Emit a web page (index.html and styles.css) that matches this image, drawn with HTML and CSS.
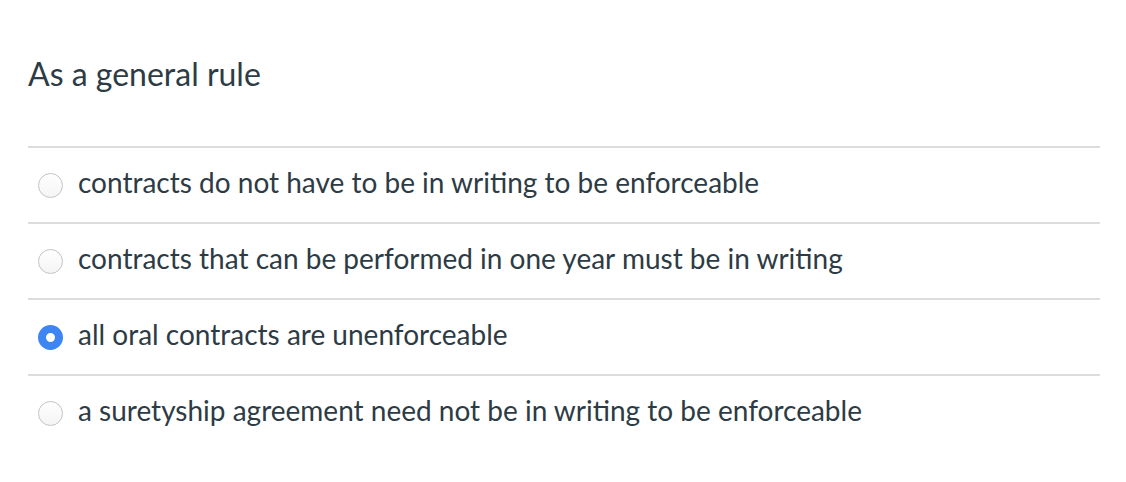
FILE: index.html
```html
<!DOCTYPE html>
<html>
<head>
<meta charset="utf-8">
<link rel="stylesheet" href="styles.css">
</head>
<body>
<div class="question">
  <div class="question-text">As a general rule</div>
  <div class="answers">
    <label class="answer">
      <span class="radio"></span>
      <span class="answer-text">contracts do not have to be in writing to be enforceable</span>
    </label>
    <label class="answer">
      <span class="radio"></span>
      <span class="answer-text">contracts that can be performed in one year must be in writing</span>
    </label>
    <label class="answer">
      <span class="radio checked"></span>
      <span class="answer-text">all oral contracts are unenforceable</span>
    </label>
    <label class="answer last">
      <span class="radio"></span>
      <span class="answer-text">a suretyship agreement need not be in writing to be enforceable</span>
    </label>
  </div>
</div>
</body>
</html>
```
FILE: styles.css
```css
html, body {
  margin: 0;
  padding: 0;
  background: #ffffff;
}
body {
  font-family: Lato, "Open Sans", sans-serif;
  color: #2d3b45;
}
.question {
  padding: 0 26px 0 28px;
}
.question-text {
  height: 146px;
  display: flex;
  align-items: center;
  font-size: 32px;
  line-height: 1;
  padding-top: 2px;
  box-sizing: border-box;
}
.answers {
  display: flex;
  flex-direction: column;
}
.answer {
  display: flex;
  align-items: center;
  height: 76px;
  box-sizing: border-box;
  border-top: 2px solid #dcdcdc;
  padding-left: 10px;
  gap: 15px;
  font-size: 28px;
}
.radio {
  width: 25px;
  height: 25px;
  box-sizing: border-box;
  border-radius: 50%;
  border: 1px solid #c4c4c4;
  background: linear-gradient(#ffffff, #f4f4f4);
  flex: none;
}
.radio.checked {
  border: 8px solid #3d85f2;
  background: #ffffff;
}
.answer-text {
  line-height: 1;
  padding-bottom: 6px;
}
```
